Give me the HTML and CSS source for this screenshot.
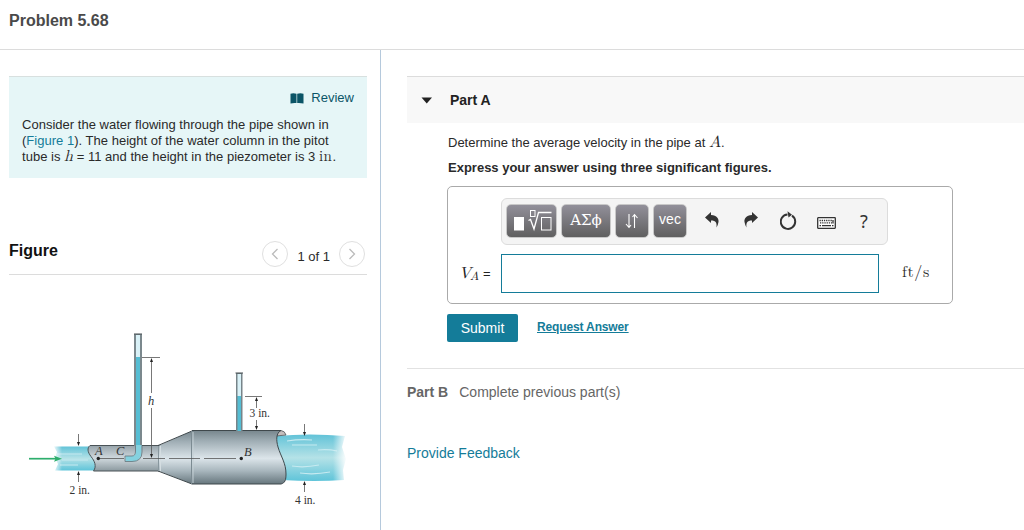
FILE: index.html
```html
<!DOCTYPE html>
<html lang="en">
<head>
    <meta charset="UTF-8">
    <title>Problem 5.68</title>
    <link rel="stylesheet" href="styles.css">
</head>
<body>
<div class="page">
    <div class="header">
        <h1>Problem 5.68</h1>
    </div>
    <div class="main">
        <div class="left">
            <div class="intro">
                <a class="review">
                    <svg width="14" height="11" viewBox="0 0 14 11">
                        <path d="M.5 .7Q3.500 0 6.500 .8V10Q3.500 9.600 .5 10.500Z" fill="#0b5567"/>
                        <path d="M7.200 .8Q10 0 13.500 .7V10.500Q10 9.600 7.200 10Z" fill="#0b5567"/>
                    </svg>
                    <span>Review</span>
                </a>
                <p class="line1">Consider the water flowing through the pipe shown in</p>
                <p class="line2">(<a class="link">Figure 1</a>). The height of the water column in the pitot</p>
                <p class="line3">tube is <i class="math">h</i> = 11 and the height in the piezometer is 3 <span class="math unit">in.</span></p>
            </div>
            <div class="figure-head">
                <h2>Figure</h2>
                <div class="pager">
                    <span class="circle"><svg width="8" height="12" viewBox="0 0 8 12"><path d="M6.500 1L1.500 6L6.500 11"/></svg></span>
                    <span class="count">1 of 1</span>
                    <span class="circle"><svg width="8" height="12" viewBox="0 0 8 12"><path d="M1.500 1L6.500 6L1.500 11"/></svg></span>
                </div>
            </div>
            <svg class="figure" width="358" height="210" viewBox="9 320 358 210">
                <defs>
                    <linearGradient id="pipe" x1="0" y1="0" x2="0" y2="1">
                        <stop offset="0" stop-color="#77868d"/>
                        <stop offset=".2" stop-color="#a0aeb5"/>
                        <stop offset=".52" stop-color="#dce5ea"/>
                        <stop offset=".75" stop-color="#a9b7be"/>
                        <stop offset="1" stop-color="#66767d"/>
                    </linearGradient>
                    <linearGradient id="small" x1="0" y1="0" x2="0" y2="1">
                        <stop offset="0" stop-color="#97a4ab"/>
                        <stop offset=".5" stop-color="#d0d9de"/>
                        <stop offset="1" stop-color="#8b999f"/>
                    </linearGradient>
                    <linearGradient id="water" x1="0" y1="0" x2="0" y2="1">
                        <stop offset="0" stop-color="#62c3d8"/>
                        <stop offset=".5" stop-color="#b5e2e7"/>
                        <stop offset="1" stop-color="#5fc4d9"/>
                    </linearGradient>
                    <linearGradient id="fadeL"><stop offset="0" stop-color="#fff"/><stop offset="1" stop-color="#fff" stop-opacity="0"/></linearGradient>
                    <linearGradient id="fadeR"><stop offset="0" stop-color="#fff" stop-opacity="0"/><stop offset="1" stop-color="#fff"/></linearGradient>
                </defs>
                <!-- inlet water -->
                <path d="M54 446.500H95V470.500H55L58 464L55 458L57 452Z" fill="url(#water)"/>
                <path d="M57 454H82M62 460H88M60 465H78" stroke="#c6eaef" stroke-width="1.200"/>
                <rect x="53" y="445" width="9" height="27" fill="url(#fadeL)"/>
                <!-- outlet water -->
                <path d="M276 436Q310 433 345 436L342 447L346 459L343 470L344 480Q315 482 282 480Z" fill="url(#water)"/>
                <path d="M287 441Q300 439 312 440M292 445H317M318 450Q328 449 337 451M292 466Q304 468 319 465M300 473Q314 475 330 472" fill="none" stroke="#c6eaf0" stroke-width="1.200"/>
                <rect x="333" y="433" width="14" height="50" fill="url(#fadeR)"/>
                <!-- small pipe -->
                <path d="M90 445.500H160V471H93.500C97 466 94.500 461 91 456.500C87.500 452 87 448 90 445.500Z" fill="url(#small)"/>
                <path d="M160 445.500H90C87 448 87.500 452 91 456.500C94.500 461 97 466 93.500 471H160" fill="none" stroke="#4a5357"/>
                <!-- expansion -->
                <path d="M159 445.500L192 431V484L159 471Z" fill="url(#pipe)"/>
                <path d="M158 445.500L192 431M158 471L192 484" fill="none" stroke="#3f484c"/>
                <path d="M158.500 446V471" stroke="#88979e"/>
                <path d="M160.500 446V471" stroke="#d4dde1"/>
                <!-- large pipe -->
                <path d="M276 436Q278 430 281 430.500Q285 431 286 435Z" fill="#c5bebd" stroke="#4a5357" stroke-width=".8"/>
                <path d="M192 430.500H281C276 433 276 440 278 447C281 457 286 463 286 474C286 480 285 483 281 484H192Z" fill="url(#pipe)"/>
                <path d="M192 430.500H281C276 433 276 440 278 447C281 457 286 463 286 474C286 480 285 483 281 484H192" fill="none" stroke="#3f484c"/>
                <path d="M191.500 431V484" stroke="#7c8b92"/>
                <path d="M193 432V483" stroke="#c3cfd4"/>
                <!-- pitot tube -->
                <rect x="134" y="334" width="8" height="112" fill="#7b888d"/>
                <rect x="136" y="335" width="4" height="22" fill="#d9f1f7"/>
                <rect x="136" y="357" width="4" height="92" fill="#55bdd3"/>
                <path d="M134 334H142" stroke="#444c50"/>
                <path d="M125.500 456H132Q136 456 136 451V445H141.500V452Q141.500 461.500 132 461.500H125.500Z" fill="#84d1df"/>
                <path d="M135.500 446V451Q135.500 456 132 456H125V461.500H132Q142 461.500 142 452V446" fill="none" stroke="#65757b" stroke-width=".8"/>
                <!-- piezometer -->
                <rect x="236" y="373" width="6.500" height="58" fill="#778489"/>
                <rect x="237.500" y="374" width="3.500" height="22" fill="#d9f1f7"/>
                <rect x="237.500" y="396" width="3.500" height="35" fill="#55bdd3"/>
                <path d="M235.500 373H243" stroke="#444c50"/>
                <!-- dimensions -->
                <g class="dims">
                    <path d="M142 357.500H160M151.500 361V393M151.500 408V456M98 458.500H124M143 458.500H165M169 458.500H200M204 458.500H236"/>
                    <path d="M245 396.500H262M256.500 400V408M256.500 420V427M78.500 434V443M78.500 474V482M304.500 424V433M304.500 484V492"/>
                </g>
                <g class="heads">
                    <path d="M151.500 358L153 362H150ZM151.500 458L153 454H150ZM256.500 397L258 401H255ZM256.500 430L258 426H255Z"/>
                    <path d="M78.500 446L80 442H77ZM78.500 471L80 475H77ZM304.500 436L306 432H303ZM304.500 481L306 485H303Z"/>
                    <circle cx="98.300" cy="458.500" r="1.700"/>
                    <circle cx="241.300" cy="458.500" r="1.700"/>
                </g>
                <path d="M29 458.700H56" stroke="#2eae6d" stroke-width="1.700"/>
                <path d="M54 455.700L62 458.700L54 461.700L55.500 458.700Z" fill="#2eae6d"/>
                <g class="labels">
                    <text x="148" y="405" class="it">h</text>
                    <text x="95" y="455" class="it">A</text>
                    <text x="116" y="455" class="it">C</text>
                    <text x="244" y="456" class="it">B</text>
                    <text x="249.500" y="417">3 in.</text>
                    <text x="69.500" y="494">2 in.</text>
                    <text x="295" y="504">4 in.</text>
                </g>
            </svg>
        </div>
        <div class="right">
            <div class="part-head">
                <svg width="12" height="7" viewBox="0 0 12 7"><path d="M0.500 .5H11L5.750 6.500Z" fill="#222"/></svg>
                <h3>Part A</h3>
            </div>
            <div class="part-body">
                <p class="question">Determine the average velocity in the pipe at <i class="math">A</i>.</p>
                <p class="express">Express your answer using three significant figures.</p>
                <div class="answer">
                    <div class="toolbar">
                        <span class="btn b1">
                            <svg width="49" height="32" viewBox="0 0 49 32" fill="none" stroke="#fff">
                                <rect x="7" y="12" width="10" height="13.500" fill="#fff" stroke="none"/>
                                <rect x="23.500" y="5.500" width="4.500" height="6"/>
                                <path d="M21.500 15.500L23.500 14.500L27 24L31.500 7.500H44.500" stroke-width="1.300"/>
                                <rect x="34.500" y="12.500" width="9.500" height="12.500"/>
                            </svg>
                        </span>
                        <span class="btn b2">ΑΣϕ</span>
                        <span class="btn b3">
                            <svg width="14" height="16" viewBox="0 0 14 16" fill="none" stroke="#fff" stroke-width="1.100">
                                <path d="M4 1V14.500M1 11L4 14.500L6 12M9.500 15V1.500M7.500 4L9.500 1.500L12.500 5"/>
                            </svg>
                        </span>
                        <span class="btn b4">vec</span>
                        <svg class="tool t1" width="14" height="16" viewBox="0 0 14 16"><path d="M0 5.500L6 0V3C12 3 14 7 13.500 10Q13 13 11.500 15.500C12 11 11 8.500 6 8.500V11Z"/></svg>
                        <svg class="tool t2" width="14" height="16" viewBox="0 0 14 16"><path d="M14 5.500L8 0V3C2 3 0 7 .5 10Q1 13 2.500 15.500C2 11 3 8.500 8 8.500V11Z"/></svg>
                        <svg class="tool t3" width="17" height="19" viewBox="0 0 17 19"><path d="M12 4.700A7.200 7.200 0 1 1 7.500 3.500" fill="none" stroke="#333" stroke-width="2"/><path d="M7.500 .3L12 3.700L8.500 6.500Z"/></svg>
                        <svg class="tool t4" width="19" height="12" viewBox="0 0 19 12"><rect x=".7" y=".7" width="17.600" height="10.600" rx=".5" fill="#fff" stroke="#333" stroke-width="1.300"/><path d="M2.500 3.500H15M3 5.900H15" stroke="#333" stroke-width="1.300" stroke-dasharray="1.300 .9"/><path d="M5 8.700H14M2.500 8.700H4M15 8.700H16.500M16 3V6.500" stroke="#333" stroke-width="1.300"/></svg>
                        <span class="help">?</span>
                    </div>
                    <div class="entry">
                        <div class="var"><i>V<span class="sub">A</span></i><span class="eq">=</span></div>
                        <div class="field"></div>
                        <div class="units">ft/s</div>
                    </div>
                </div>
                <div class="actions">
                    <span class="submit">Submit</span>
                    <a class="request">Request Answer</a>
                </div>
            </div>
            <div class="part-b"><b>Part B</b><span>Complete previous part(s)</span></div>
            <a class="feedback">Provide Feedback</a>
        </div>
    </div>
</div>
</body>
</html>
```
FILE: styles.css
```css
* {
    box-sizing: border-box;
    margin: 0;
    padding: 0;
}

body {
    background: #fff;
    color: #2a2a2a;
    font-family: "Liberation Sans", Arial, sans-serif;
    overflow: hidden;
}

.page {
    height: 530px;
    display: flex;
    flex-direction: column;
}

.header {
    height: 50px;
    padding: 11px 9px 0;
    border-bottom: 1px solid #dcdcdc;
}

h1 {
    font-size: 16px;
    line-height: 20px;
    color: #4a4a4a;
}

.main {
    flex: 1;
    display: flex;
}

.left {
    width: 381px;
    padding: 26px 13px 0 9px;
    border-right: 1px solid #b5c9dc;
}

.intro {
    height: 102px;
    padding: 13px 13px 0;
    background: #e6f6f7;
    border-top: 1px solid #d8e0df;
    font-size: 13px;
    line-height: 16px;
    letter-spacing: .02px;
    white-space: nowrap;
}

.review {
    display: flex;
    justify-content: flex-end;
    align-items: center;
    gap: 7px;
    height: 16px;
    margin-bottom: 11px;
    color: #0b5567;
    font-size: 13px;
}

.link {
    color: #147c99;
}

.math {
    font-family: "Latin Modern Math", "Liberation Serif", "Times New Roman", serif;
    font-size: 16px;
    line-height: 10px;
}

.unit {
    font-size: 15px;
    letter-spacing: .4px;
}

.figure-head {
    display: flex;
    justify-content: space-between;
    height: 42px;
    margin-top: 55px;
    padding: 8px 2px 0 0;
    border-bottom: 1px solid #dcdcdc;
}

h2 {
    font-size: 16px;
    line-height: 20px;
    color: #111;
}

.pager {
    display: flex;
    gap: 9px;
}

.circle {
    display: flex;
    align-items: center;
    justify-content: center;
    width: 26px;
    height: 26px;
    border: 1px solid #e0e0e0;
    border-radius: 50%;
}

.circle svg {
    fill: none;
    stroke: #bbb;
    stroke-width: 1.3;
}

.count {
    font-size: 13px;
    line-height: 31px;
}

.figure {
    display: block;
    margin-top: 45px;
}

.dims {
    fill: none;
    stroke: #555;
    stroke-width: .8;
}

.heads {
    fill: #222;
}

.labels {
    fill: #333;
    font-family: "Liberation Serif", "Times New Roman", serif;
    font-size: 11.5px;
}

.labels .it {
    font-style: italic;
    font-size: 12.5px;
}

.right {
    flex: 1;
    padding: 26px 0 0 26px;
}

.part-head {
    display: flex;
    align-items: center;
    gap: 17px;
    height: 47px;
    padding-left: 14px;
    background: #f8f8f8;
    border-top: 1px solid #dcdcdc;
}

h3 {
    font-size: 14px;
    line-height: 18px;
    color: #222;
}

.part-body {
    padding-left: 40px;
}

.question,
.express {
    padding-left: 1px;
    font-size: 13px;
    line-height: 16px;
}

.question {
    margin-top: 12px;
}

.express {
    margin-top: 9px;
    font-weight: bold;
}

.answer {
    width: 506px;
    height: 118px;
    margin-top: 10px;
    padding: 11px 0 0 11px;
    border: 1px solid #aaa;
    border-radius: 5px;
}

.toolbar {
    display: flex;
    align-items: flex-start;
    width: 387px;
    height: 47px;
    margin-left: 42px;
    padding: 5px 0 0 4px;
    background: #f4f4f4;
    border: 1px solid #dcdcdc;
    border-radius: 6px;
}

.btn {
    display: flex;
    align-items: center;
    justify-content: center;
    height: 34px;
    margin-right: 4px;
    background: linear-gradient(#92909a, #606060);
    border: 1px solid #c8c8c8;
    border-radius: 5px;
    color: #fff;
}

.b1 {
    width: 51px;
}

.b2 {
    width: 50px;
    padding-bottom: 2px;
    font-family: "DejaVu Serif", "Liberation Serif", serif;
    font-size: 15px;
}

.b3 {
    width: 34px;
}

.b4 {
    width: 34px;
    font-size: 14px;
    padding-bottom: 4px;
}

.tool {
    fill: #333;
}

.t1 {
    margin: 8px 0 0 14px;
}

.t2 {
    margin: 8px 0 0 25px;
}

.t3 {
    margin: 7px 0 0 22px;
}

.t4 {
    margin: 13px 0 0 20px;
}

.help {
    margin: 7px 0 0 24px;
    color: #333;
    font-family: "Noto Sans", sans-serif;
    font-size: 18px;
    line-height: 20px;
}

.entry {
    display: flex;
    align-items: center;
    margin-top: 9px;
}

.var {
    width: 42px;
    color: #222;
    font-family: "Latin Modern Math", "Liberation Serif", serif;
    font-size: 16px;
    line-height: 20px;
    white-space: nowrap;
}

.sub {
    font-size: 12px;
    position: relative;
    top: 2px;
    left: -1px;
}

.eq {
    margin-left: 3px;
    font-family: "Liberation Sans", sans-serif;
    font-size: 13px;
}

.field {
    width: 378px;
    height: 39px;
    background: #fff;
    border: 1px solid #147c99;
}

.units {
    margin-left: 23px;
    font-family: "Latin Modern Math", "Liberation Serif", serif;
    font-size: 16px;
    line-height: 20px;
    letter-spacing: .6px;
    padding-bottom: 4px;
}

.actions {
    display: flex;
    align-items: center;
    margin-top: 10px;
}

.submit {
    width: 71px;
    height: 28px;
    background: #147c99;
    border-radius: 2px;
    color: #fff;
    font-size: 14px;
    line-height: 28px;
    text-align: center;
}

.request {
    margin-left: 19px;
    color: #147c99;
    font-size: 12px;
    font-weight: bold;
    letter-spacing: -.14px;
    padding-bottom: 2px;
    text-decoration: underline;
}

.part-b {
    display: flex;
    gap: 11px;
    margin-top: 26px;
    padding-top: 14px;
    border-top: 1px solid #e2e2e2;
    color: #666;
    font-size: 14px;
    line-height: 18px;
}

.feedback {
    display: block;
    margin-top: 43px;
    color: #147c99;
    font-size: 14px;
    line-height: 18px;
}
```
